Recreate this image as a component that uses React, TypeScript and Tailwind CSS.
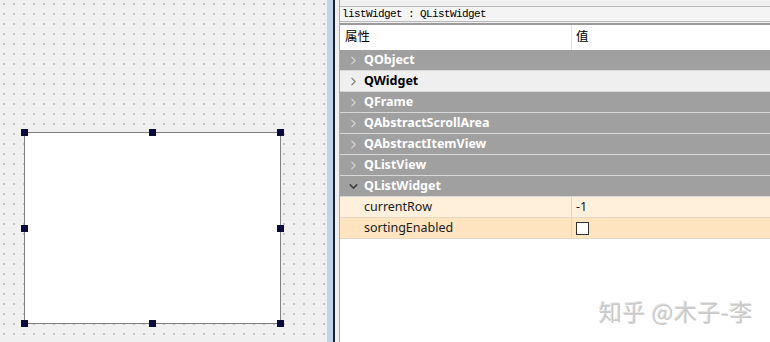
import { ChevronRight, ChevronDown } from 'lucide-react';

const groups = [
  { name: 'QObject', light: false },
  { name: 'QWidget', light: true },
  { name: 'QFrame', light: false },
  { name: 'QAbstractScrollArea', light: false },
  { name: 'QAbstractItemView', light: false },
  { name: 'QListView', light: false },
];

function Handle({ className }: { className: string }) {
  return <span className={`absolute h-[7px] w-[7px] bg-[#0a0a40] ${className}`} />;
}

function GroupRow({ name, light, open }: { name: string; light: boolean; open?: boolean }) {
  return (
    <div
      className={`flex h-[21px] items-center border-b border-[#d8d8d8] ${
        light ? 'bg-[#efefef] text-black' : 'bg-[#a0a0a0] text-white'
      }`}
    >
      <span className="flex w-[24px] justify-center pl-[2px]">
        {open ? (
          <ChevronDown size={13} strokeWidth={3} className="text-[#404040]" />
        ) : (
          <ChevronRight size={13} strokeWidth={2.5} className={light ? 'text-[#8a8a8a]' : 'text-[#cfcfcf]'} />
        )}
      </span>
      <span className="text-[12.5px] font-bold">{name}</span>
    </div>
  );
}

function PropRow({ name, bg, children }: { name: string; bg: string; children: React.ReactNode }) {
  return (
    <div className={`flex h-[21px] items-center border-b border-[#e6d8c4] ${bg}`}>
      <span className="w-[231px] pl-[24px] text-[12.5px] text-[#202020]">{name}</span>
      <span className="flex h-full flex-1 items-center border-l border-[#e0d4c4] pl-[4px] text-[12.5px] text-[#202020]">
        {children}
      </span>
    </div>
  );
}

export default function App() {
  return (
    <div className="flex h-[342px] w-[770px] overflow-hidden bg-white font-['Noto_Sans','Noto_Sans_CJK_SC',sans-serif]">
      {/* form canvas */}
      <div className="h-full w-[327px] bg-[#f0f0f0] bg-[radial-gradient(circle,#b4b4b4_0.6px,transparent_1px)] bg-[size:10px_10px] bg-[position:-1px_-1px] pl-[24px] pt-[132px]">
        <div className="relative h-[192px] w-[257px] border border-[#808080] bg-white">
          <Handle className="-left-[4px] -top-[4px]" />
          <Handle className="left-[124px] -top-[4px]" />
          <Handle className="-right-[4px] -top-[4px]" />
          <Handle className="-left-[4px] top-[92px]" />
          <Handle className="-right-[4px] top-[92px]" />
          <Handle className="-bottom-[4px] -left-[4px]" />
          <Handle className="-bottom-[4px] left-[124px]" />
          <Handle className="-bottom-[4px] -right-[4px]" />
        </div>
      </div>

      {/* splitter */}
      <div className="w-[6px] bg-[#bcd4ec]" />
      <div className="w-[2px] bg-[#1e1e2a]" />
      <div className="w-[5px] border-r border-[#a8a8a8] bg-[#f0f0f0]" />

      {/* property editor */}
      <div className="relative flex flex-1 flex-col bg-[#f0f0f0]">
        <div className="mt-[6px] flex h-[16px] items-center border-y border-[#b8b8b8] bg-[#f4f4f4] pl-[2px] font-['Liberation_Mono',monospace] text-[11px] tracking-[-0.6px] leading-none text-black">
          listWidget : QListWidget
        </div>
        <div className="mt-[1px] flex flex-1 flex-col border-t-2 border-[#9a9a9a] bg-white">
          <div className="flex h-[25px] items-center bg-white text-[12.5px] text-black">
            <span className="w-[231px] pl-[5px]">属性</span>
            <span className="flex h-full flex-1 items-center border-l border-[#e2e2e2] pl-[4px]">值</span>
          </div>
          {groups.map((g) => (
            <GroupRow key={g.name} name={g.name} light={g.light} />
          ))}
          <GroupRow name="QListWidget" light={false} open />
          <PropRow name="currentRow" bg="bg-[#fff0dc]">
            -1
          </PropRow>
          <PropRow name="sortingEnabled" bg="bg-[#ffe4c0]">
            <span className="h-[13px] w-[13px] border border-[#333] bg-white" />
          </PropRow>
        </div>

        <div className="absolute bottom-[14px] right-[17px] text-[23px] tracking-[0.5px] text-[#cacaca] [text-shadow:1px_1px_0_#ffffff,-1px_-1px_0_#e4e4e4] font-['Noto_Sans_CJK_SC',sans-serif]">
          知乎 @木子-李
        </div>
      </div>
    </div>
  );
}
